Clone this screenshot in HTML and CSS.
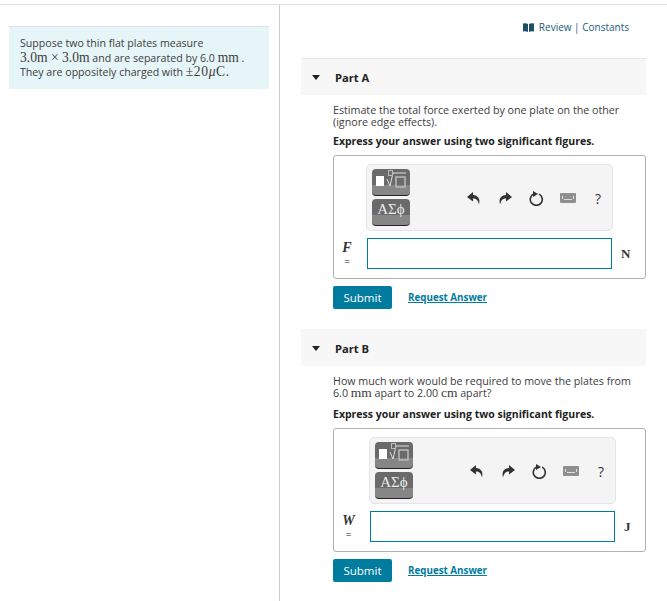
FILE: index.html
```html
<!DOCTYPE html>
<html lang="en">
<head>
<meta charset="utf-8">
<title>Part A and Part B</title>
<link rel="stylesheet" href="styles.css">
</head>
<body>
<div class="page">
  <aside class="left">
    <div class="intro">
      <p>Suppose two thin flat plates measure<br><span class="m">3.0m × 3.0m</span> and are separated by 6.0 <span class="m">mm</span> .<br>They are oppositely charged with <span class="m wide">±20<i>μ</i>C.</span></p>
    </div>
  </aside>
  <main class="right">
    <div class="links">
      <svg class="book" width="11" height="9" viewBox="0 0 11 9"><path d="M0 .5Q3 0 5 1v8Q3 8 0 8.500zM11 .5Q8 0 6 1v8q2-1 5-.5z" fill="#1d4f6b"/></svg>
      <span>Review | Constants</span>
    </div>

    <section class="part part-a">
      <header class="part-head"><span class="tri"></span><b>Part A</b></header>
      <div class="body">
        <p class="q">Estimate the total force exerted by one plate on the other<br>(ignore edge effects).</p>
        <p class="exp">Express your answer using two significant figures.</p>
        <div class="answer">
          <div class="toolbar">
            <div class="tpl">
              <div class="btn"><svg width="38" height="26" viewBox="0 0 38 26"><rect x="4" y="7" width="8" height="10" fill="#fff"/><path d="M15 10l3 7 3-13h13" fill="none" stroke="#ddd" stroke-width="1"/><rect x="16.500" y="1.500" width="4" height="5" fill="none" stroke="#bbb"/><rect x="24" y="8" width="9" height="10" fill="none" stroke="#bbb" stroke-width="1.500"/></svg></div>
              <div class="btn greek">ΑΣϕ</div>
            </div>
            <div class="tools">
              <svg width="14" height="13" viewBox="0 0 14 13"><path d="M6 0L0 5l6 4.500V6.500c3 0 5 1.500 6 6 1.500-6-1-9-6-9.500z" fill="#333"/></svg>
              <svg width="14" height="13" viewBox="0 0 14 13"><path d="M8 0l6 5-6 4.500V6.500c-3 0-5 1.500-6 6C.5 6.500 3 3.500 8 3z" fill="#333"/></svg>
              <svg width="15" height="15" viewBox="0 0 15 15"><path d="M5 2.800a6 6 0 1 0 5.200.3" fill="none" stroke="#333" stroke-width="1.600"/><path d="M4 0v6l5-3z" fill="#333"/></svg>
              <svg width="16" height="10" viewBox="0 0 16 10"><rect width="16" height="10" rx="1" fill="#8f8f8f"/><path d="M2 3h1v3H2zM13 3h1v3h-1zM4 6h8v1H4z" fill="#ddd"/></svg>
              <span class="help">?</span>
            </div>
          </div>
          <div class="row">
            <div class="var"><i>F</i><span>=</span></div>
            <div class="input"></div>
            <div class="unit">N</div>
          </div>
        </div>
        <div class="actions"><button class="submit">Submit</button><a class="req">Request Answer</a></div>
      </div>
    </section>

    <section class="part part-b">
      <header class="part-head"><span class="tri"></span><b>Part B</b></header>
      <div class="body">
        <p class="q">How much work would be required to move the plates from<br>6.0 <span class="m">mm</span> apart to 2.00 <span class="m">cm</span> apart?</p>
        <p class="exp">Express your answer using two significant figures.</p>
        <div class="answer alt">
          <div class="toolbar">
            <div class="tpl">
              <div class="btn"><svg width="38" height="26" viewBox="0 0 38 26"><rect x="4" y="7" width="8" height="10" fill="#fff"/><path d="M15 10l3 7 3-13h13" fill="none" stroke="#ddd" stroke-width="1"/><rect x="16.500" y="1.500" width="4" height="5" fill="none" stroke="#bbb"/><rect x="24" y="8" width="9" height="10" fill="none" stroke="#bbb" stroke-width="1.500"/></svg></div>
              <div class="btn greek">ΑΣϕ</div>
            </div>
            <div class="tools">
              <svg width="14" height="13" viewBox="0 0 14 13"><path d="M6 0L0 5l6 4.500V6.500c3 0 5 1.500 6 6 1.500-6-1-9-6-9.500z" fill="#333"/></svg>
              <svg width="14" height="13" viewBox="0 0 14 13"><path d="M8 0l6 5-6 4.500V6.500c-3 0-5 1.500-6 6C.5 6.500 3 3.500 8 3z" fill="#333"/></svg>
              <svg width="15" height="15" viewBox="0 0 15 15"><path d="M5 2.800a6 6 0 1 0 5.200.3" fill="none" stroke="#333" stroke-width="1.600"/><path d="M4 0v6l5-3z" fill="#333"/></svg>
              <svg width="16" height="10" viewBox="0 0 16 10"><rect width="16" height="10" rx="1" fill="#8f8f8f"/><path d="M2 3h1v3H2zM13 3h1v3h-1zM4 6h8v1H4z" fill="#ddd"/></svg>
              <span class="help">?</span>
            </div>
          </div>
          <div class="row">
            <div class="var"><i>W</i><span>=</span></div>
            <div class="input"></div>
            <div class="unit">J</div>
          </div>
        </div>
        <div class="actions"><button class="submit">Submit</button><a class="req">Request Answer</a></div>
      </div>
    </section>
  </main>
</div>
</body>
</html>
```
FILE: styles.css
```css
* { box-sizing: border-box; }
html, body { margin: 0; padding: 0; background: #fff; }
body { font-family: "Open Sans", sans-serif; font-size: 11px; line-height: 13px; color: #333; overflow: hidden; }
p { margin: 0; }
.page { display: grid; grid-template-columns: 280px 1fr; height: 601px; margin-top: 4px; border-top: 1px solid #e2e2e2; overflow: hidden; }
.left { border-right: 1px solid #ccc; padding: 21px 10px 0 9px; }
.intro { background: #e6f5f7; border-top: 1px solid #dde3e5; height: 63px; padding: 10px 11px; line-height: 13.500px; font-size: 10.600px; }
.intro p { color: #3d3d3d; }
.m { font-family: "Liberation Serif", serif; font-size: 13.600px; }
.wide { letter-spacing: .6px; }
.q .m { font-size: 13.500px; line-height: 12px; }
.right { padding: 0 21px 0 21px; }
.links { display: flex; align-items: center; justify-content: flex-end; gap: 5px; height: 53px; padding: 0 17px 9px 0; color: #1d5d7a; font-size: 10px; }
.book { flex: none; }
.part-head { height: 37px; background: #f7f7f7; border-top: 1px solid #e8e8e8; display: flex; align-items: center; padding-left: 11px; }
.part-head b { margin-left: 15px; font-size: 11.200px; color: #222; font-weight: 700; }
.part-b .part-head { border-top-color: #f7f7f7; }
.tri { width: 0; height: 0; border-left: 4.500px solid transparent; border-right: 4.500px solid transparent; border-top: 5px solid #222; }
.body { padding: 9px 0 0 32px; }
.q { color: #3d3d3d; width: 312px; font-size: 10.700px; line-height: 12px; }
.exp { font-weight: 700; font-size: 10.500px; line-height: 13px; margin-top: 7px; color: #222; }
.part-b .exp { margin-top: 9px; }
.answer { margin-top: 7px; height: 124px; width: 313px; border: 1px solid #b0b0b0; border-radius: 3px; padding: 8px 0 0 32px; }
.answer.alt { padding-left: 35px; }
.toolbar { width: 247px; height: 67px; background: #f4f4f4; border: 1px solid #e4e4e4; border-radius: 5px; display: flex; padding: 4px 0 0 5px; }
.tpl { display: flex; flex-direction: column; gap: 3px; }
.btn { width: 38px; height: 27px; border-radius: 4px; background: linear-gradient(#6a6a6a, #6a6a6a 60%, #868686 62%); border-bottom: 1px solid #222; }
.btn svg { display: block; }
.greek { font-family: "Liberation Serif", serif; color: #ececec; font-size: 15px; line-height: 20px; text-align: center; }
.tools { flex: 1; display: flex; justify-content: space-between; align-items: center; padding: 0 9px 4px 57px; height: 62px; }
.help { font-size: 14px; color: #333; width: 10px; text-align: center; }
.row { display: flex; align-items: center; margin-top: 7px; margin-left: -26px; }
.var { width: 26px; padding-right: 12px; text-align: center; font-family: "Liberation Serif", serif; font-size: 14px; font-weight: 700; line-height: 14px; display: flex; flex-direction: column; align-items: center; }
.var span { font-family: "Open Sans", sans-serif; font-weight: 400; font-size: 10px; line-height: 12px; color: #222; }
.input { width: 245px; height: 31px; margin-left: 1px; border: 1px solid #007c9f; flex: none; }
.unit { font-family: "Liberation Serif", serif; font-weight: 700; font-size: 13px; margin-left: 9px; }
.answer.alt .row { margin-left: -29px; }
.answer.alt .var { width: 29px; }
.actions { display: flex; align-items: center; margin-top: 7px; }
.submit { width: 59px; height: 23px; border: 0; border-radius: 2px; background: #007c9f; color: #fff; font-family: "Open Sans", sans-serif; font-size: 11.500px; padding: 0; }
.req { margin-left: 16px; color: #007c9f; font-weight: 700; font-size: 9.800px; text-decoration: underline; }
.part-b { margin-top: 20px; }
```
